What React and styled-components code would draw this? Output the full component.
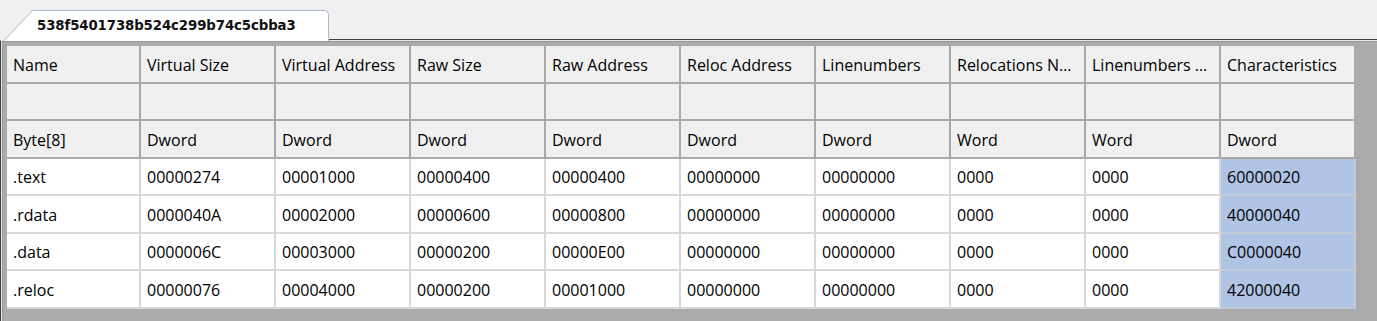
import styled, { createGlobalStyle } from "styled-components";

const GlobalStyle = createGlobalStyle`
    html, body {
        margin: 0;
        padding: 0;
        background: #f0f0f0;
    }
    body {
        width: 1377px;
        height: 321px;
        overflow: hidden;
        font-family: "Open Sans", "Noto Sans", "Liberation Sans", sans-serif;
    }
`;

const columns = [
    { name: "Name", type: "Byte[8]" },
    { name: "Virtual Size", type: "Dword" },
    { name: "Virtual Address", type: "Dword" },
    { name: "Raw Size", type: "Dword" },
    { name: "Raw Address", type: "Dword" },
    { name: "Reloc Address", type: "Dword" },
    { name: "Linenumbers", type: "Dword" },
    { name: "Relocations N…", type: "Word" },
    { name: "Linenumbers …", type: "Word" },
    { name: "Characteristics", type: "Dword" },
];

const sections = [
    [".text", "00000274", "00001000", "00000400", "00000400", "00000000", "00000000", "0000", "0000", "60000020"],
    [".rdata", "0000040A", "00002000", "00000600", "00000800", "00000000", "00000000", "0000", "0000", "40000040"],
    [".data", "0000006C", "00003000", "00000200", "00000E00", "00000000", "00000000", "0000", "0000", "C0000040"],
    [".reloc", "00000076", "00004000", "00000200", "00001000", "00000000", "00000000", "0000", "0000", "42000040"],
];

const Window = styled.div`
    display: flex;
    flex-direction: column;
    width: 1377px;
    height: 321px;
`;

const TabStrip = styled.div`
    display: flex;
    align-items: flex-end;
    height: 40px;
    padding-left: 3px;
    box-sizing: border-box;
`;

const Tab = styled.div`
    position: relative;
    width: 326px;
    height: 30px;
    display: flex;
    align-items: center;
    padding-left: 34px;
    box-sizing: border-box;
    font-family: "DejaVu Sans", Verdana, sans-serif;
    font-weight: bold;
    font-size: 13.3px;
    color: #111;
    letter-spacing: -0.1px;

    svg {
        position: absolute;
        left: 0;
        top: 0;
    }
    span {
        position: relative;
    }
`;

const TabRule = styled.div`
    flex: 1;
    height: 1px;
    background: #3f3f3f;
`;

const Frame = styled.div`
    flex: 1;
    display: flex;
    background: #ababab;
    border-top: 1px solid #e8e8e8;
    border-left: 1px solid #3f3f3f;
    padding: 5px 0 0 6px;
    box-shadow: inset 1px 0 0 #e8e8e8, inset 2px 0 0 #9a9a9a, inset 0 1px 0 #9a9a9a;
`;

const Grid = styled.div`
    display: grid;
    grid-template-columns: 134px repeat(9, 135px);
    grid-auto-rows: 37.5px;
    align-self: flex-start;
`;

const Cell = styled.div`
    display: flex;
    align-items: center;
    padding: 2px 0 0 6px;
    box-sizing: border-box;
    font-size: 16px;
    color: #000;
    white-space: nowrap;
    overflow: hidden;
    background: ${(p) => (p.$selected ? "#b0c4e5" : p.$head ? "#f0f0f0" : "#ffffff")};
    border-right: 2px solid ${(p) => (p.$head ? "#a9a9a9" : p.$selected ? "#c3cbd8" : "#d8d8d8")};
    border-bottom: 2px solid ${(p) => (p.$head ? "#a9a9a9" : p.$selected ? "#c3cbd8" : "#d8d8d8")};
`;

const TabShape = () => (
    <svg width="327" height="31" viewBox="0 0 327 31">
        <path d="M0.5 31 L29.5 0.5 L321.5 0.5 Q325.5 0.5 325.5 4.5 L325.5 31" fill="#ffffff" stroke="#a6bad2" strokeWidth="1" />
    </svg>
);

export default function App() {
    return (
        <>
            <GlobalStyle />
            <Window>
                <TabStrip>
                    <Tab>
                        <TabShape />
                        <span>538f5401738b524c299b74c5cbba3</span>
                    </Tab>
                    <TabRule />
                </TabStrip>
                <Frame>
                    <Grid>
                        {columns.map((c) => (
                            <Cell key={"h" + c.name} $head>{c.name}</Cell>
                        ))}
                        {columns.map((c) => (
                            <Cell key={"b" + c.name} $head />
                        ))}
                        {columns.map((c) => (
                            <Cell key={"t" + c.name} $head>{c.type}</Cell>
                        ))}
                        {sections.map((row) =>
                            row.map((v, i) => (
                                <Cell key={row[0] + i} $selected={i === row.length - 1}>{v}</Cell>
                            ))
                        )}
                    </Grid>
                </Frame>
            </Window>
        </>
    );
}
